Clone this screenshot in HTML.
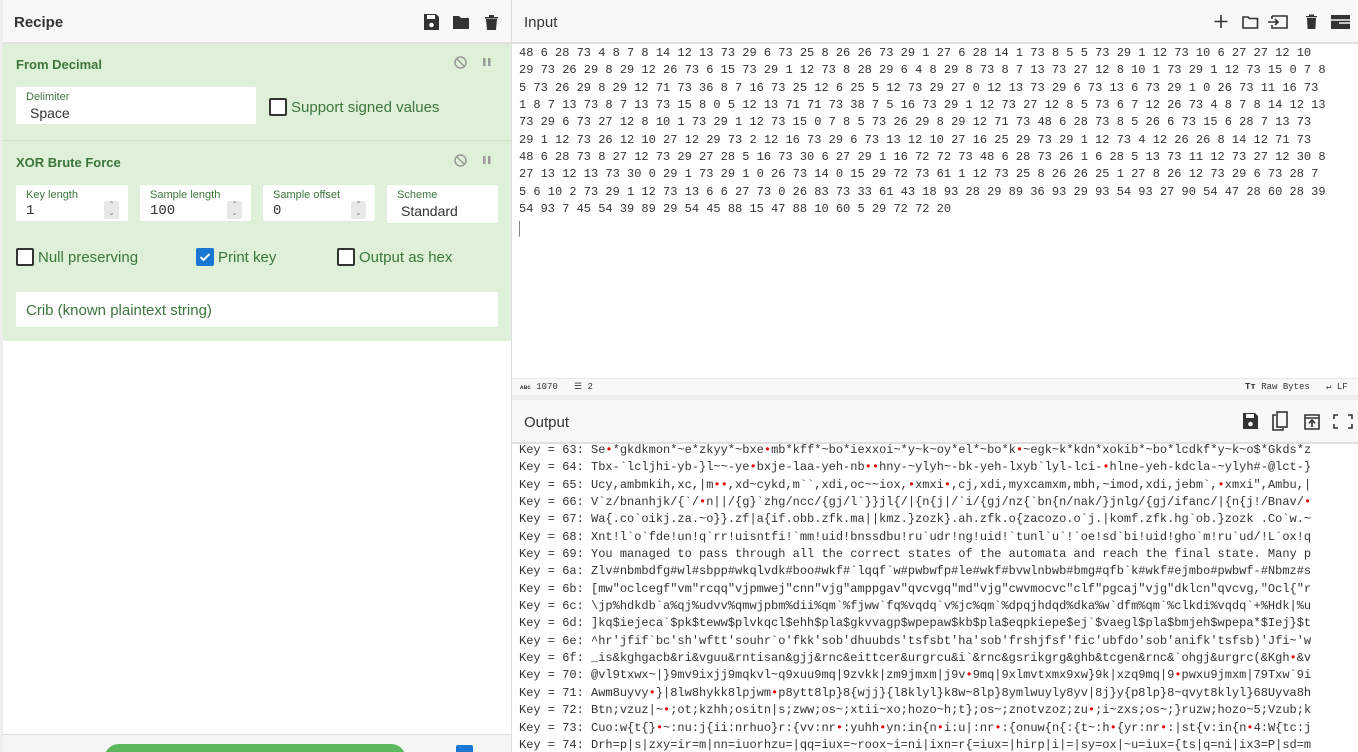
<!DOCTYPE html>
<html style="overflow:hidden;width:1358px;height:752px"><head><meta charset="utf-8"><style>
*{box-sizing:border-box;margin:0;padding:0}
body{width:1358px;height:752px;overflow:hidden;background:#fff;font-family:"Liberation Sans",sans-serif;position:relative}
.abs{position:absolute}
.hdr{background:#f8f8f8;border-bottom:2px solid #e0e0e0;height:44px}
.title{font-size:15px;font-weight:bold;color:#333;position:absolute;top:14px}
.op{font-size:13px;font-weight:bold;color:#3c763d}
.field{background:#fff;position:absolute;border-radius:2px}
.field .lbl{position:absolute;left:10px;top:4px;font-size:11px;color:#3c763d}
.field .val{position:absolute;left:10px;top:18px;font-size:14px;color:#333}
.mono{font-family:"Liberation Mono",monospace}
.cb{position:absolute;width:18px;height:18px;border:2px solid #333;border-radius:2px;background:#fff}
.cbl{position:absolute;font-size:15px;color:#3c763d}
.spin{position:absolute;width:15px;height:18px;background:#e8e8e8;border-radius:2px;color:#888;font-size:8px;text-align:center;line-height:8px}
pre{font-family:"Liberation Mono",monospace;font-size:12px;line-height:17.35px;color:#333;white-space:pre;overflow:hidden}
.r{color:#e00}
</style></head><body>
<div class="abs" style="left:0;top:0;width:512px;height:752px;border-right:1px solid #ddd;border-left:3px solid #eee;overflow:hidden">
 <div class="hdr abs" style="left:0;top:0;width:509px"><div class="title" style="left:11px">Recipe</div>
  <svg class="abs" style="left:420px;top:13px" width="80" height="18" viewBox="0 0 80 18">
   <path d="M1 1h12l3 3v13H1z" fill="#333"/><rect x="4" y="2" width="8" height="4" fill="#fff"/><circle cx="8.5" cy="12" r="2.3" fill="#fff"/>
   <path d="M30 3h6l2 2h8v11H30z" fill="#333"/>
   <path d="M62 4h13v1.5H62zM66 2h5v2h-5zM63 6h11l-1 11h-9z" fill="#333"/>
  </svg>
 </div>
 <div class="abs" style="left:0;top:44px;width:509px;height:297px;background:#dff0d8"></div>
 <div class="abs" style="left:0;top:140px;width:509px;height:1px;background:#c9e2bf"></div>
 <div class="op abs" style="left:13px;top:57px">From Decimal</div>
 <div class="op abs" style="left:13px;top:155px">XOR Brute Force</div>
 <svg class="abs" style="left:450px;top:55px" width="42" height="15"><circle cx="7.5" cy="7.5" r="5.5" fill="none" stroke="#999" stroke-width="1.5"/><path d="M3.5 3.5l8 8" stroke="#999" stroke-width="1.5"/><rect x="30" y="3" width="2.5" height="8" fill="#999"/><rect x="35" y="3" width="2.5" height="8" fill="#999"/></svg>
 <svg class="abs" style="left:450px;top:153px" width="42" height="15"><circle cx="7.5" cy="7.5" r="5.5" fill="none" stroke="#999" stroke-width="1.5"/><path d="M3.5 3.5l8 8" stroke="#999" stroke-width="1.5"/><rect x="30" y="3" width="2.5" height="8" fill="#999"/><rect x="35" y="3" width="2.5" height="8" fill="#999"/></svg>
 <div class="field" style="left:13px;top:87px;width:240px;height:37px"><div class="lbl">Delimiter</div><div class="val" style="left:14px">Space</div></div>
 <div class="cb" style="left:266px;top:98px"></div><div class="cbl" style="left:288px;top:99px">Support signed values</div>
 <div class="field" style="left:13px;top:185px;width:112px;height:36px"><div class="lbl">Key length</div><div class="val mono" style="left:10px">1</div><div class="spin" style="left:88px;top:16px">⌃<br>⌄</div></div>
 <div class="field" style="left:137px;top:185px;width:111px;height:36px"><div class="lbl">Sample length</div><div class="val mono">100</div><div class="spin" style="left:87px;top:16px">⌃<br>⌄</div></div>
 <div class="field" style="left:260px;top:185px;width:112px;height:36px"><div class="lbl">Sample offset</div><div class="val mono">0</div><div class="spin" style="left:88px;top:16px">⌃<br>⌄</div></div>
 <div class="field" style="left:384px;top:185px;width:111px;height:38px"><div class="lbl">Scheme</div><div class="val" style="left:14px;top:18px">Standard</div></div>
 <div class="cb" style="left:13px;top:248px"></div><div class="cbl" style="left:35px;top:249px">Null preserving</div>
 <div class="cb" style="left:193px;top:248px;background:#1976d2;border-color:#1976d2"><svg width="14" height="14" style="position:absolute;left:0;top:0"><path d="M2.5 7l3 3 6-6" stroke="#fff" stroke-width="2" fill="none"/></svg></div><div class="cbl" style="left:215px;top:249px">Print key</div>
 <div class="cb" style="left:334px;top:248px"></div><div class="cbl" style="left:356px;top:249px">Output as hex</div>
 <div class="field" style="left:13px;top:292px;width:482px;height:35px"><div class="cbl" style="left:10px;top:10px">Crib (known plaintext string)</div></div>
 <div class="abs" style="left:0;top:734px;width:509px;height:18px;background:#f5f5f5;border-top:1px solid #ddd"></div>
 <div class="abs" style="left:101px;top:744px;width:302px;height:30px;background:#5cb85c;border-radius:16px"></div>
 <div class="abs" style="left:453px;top:745px;width:17px;height:17px;background:#1976d2;border-radius:2px"></div>
</div>
<div class="abs" style="left:512px;top:0;width:846px;height:752px;overflow:hidden">
 <div class="hdr abs" style="left:0;top:0;width:846px"><div class="title" style="left:12px;font-weight:normal;font-size:15px">Input</div>
  <svg class="abs" style="left:700px;top:12px" width="146" height="20" viewBox="0 0 146 20">
   <path d="M9 3v13M2.5 9.5h13" stroke="#333" stroke-width="1.6"/>
   <path d="M31 5h5l1.5 1.5h8V16H31z" fill="none" stroke="#333" stroke-width="1.6"/>
   <path d="M60 4h15v12H60v-3M60 7V4M56 10h10M63 7l3 3-3 3" fill="none" stroke="#333" stroke-width="1.6"/>
   <path d="M94 4h11v1.3H94zM97 2.5h5V4h-5zM95 6h9l-.6 11h-7.8z" fill="#333"/>
   <path d="M119 3h19v14h-19z" fill="#333"/><path d="M119 8h19M127 11h11" stroke="#f8f8f8" stroke-width="1.4"/>
  </svg>
 </div>
 <pre class="abs" style="left:7px;top:45px;width:836px">48 6 28 73 4 8 7 8 14 12 13 73 29 6 73 25 8 26 26 73 29 1 27 6 28 14 1 73 8 5 5 73 29 1 12 73 10 6 27 27 12 10
29 73 26 29 8 29 12 26 73 6 15 73 29 1 12 73 8 28 29 6 4 8 29 8 73 8 7 13 73 27 12 8 10 1 73 29 1 12 73 15 0 7 8
5 73 26 29 8 29 12 71 73 36 8 7 16 73 25 12 6 25 5 12 73 29 27 0 12 13 73 29 6 73 13 6 73 29 1 0 26 73 11 16 73
1 8 7 13 73 8 7 13 73 15 8 0 5 12 13 71 71 73 38 7 5 16 73 29 1 12 73 27 12 8 5 73 6 7 12 26 73 4 8 7 8 14 12 13
73 29 6 73 27 12 8 10 1 73 29 1 12 73 15 0 7 8 5 73 26 29 8 29 12 71 73 48 6 28 73 8 5 26 6 73 15 6 28 7 13 73
29 1 12 73 26 12 10 27 12 29 73 2 12 16 73 29 6 73 13 12 10 27 16 25 29 73 29 1 12 73 4 12 26 26 8 14 12 71 73
48 6 28 73 8 27 12 73 29 27 28 5 16 73 30 6 27 29 1 16 72 72 73 48 6 28 73 26 1 6 28 5 13 73 11 12 73 27 12 30 8
27 13 12 13 73 30 0 29 1 73 29 1 0 26 73 14 0 15 29 72 73 61 1 12 73 25 8 26 26 25 1 27 8 26 12 73 29 6 73 28 7
5 6 10 2 73 29 1 12 73 13 6 6 27 73 0 26 83 73 33 61 43 18 93 28 29 89 36 93 29 93 54 93 27 90 54 47 28 60 28 39
54 93 7 45 54 39 89 29 54 45 88 15 47 88 10 60 5 29 72 72 20</pre>
 <div class="abs" style="left:7px;top:221px;width:1px;height:16px;background:#888"></div>
 <div class="abs" style="left:0;top:378px;width:846px;height:17px;background:#f8f8f8;border-top:1px solid #e8e8e8;font-size:9px;color:#333">
  <span class="abs mono" style="left:8px;top:3px"><b style="font-size:6px">ᴀʙᴄ</b> 1070 &nbsp;&nbsp;☰ 2</span>
  <span class="abs mono" style="left:733px;top:3px"><b>Tт</b> Raw Bytes &nbsp; ↵ LF</span>
 </div>
 <div class="abs" style="left:0;top:395px;width:846px;height:5px;background:#eee"></div>
 <div class="hdr abs" style="left:0;top:400px;width:846px"><div class="title" style="left:12px;font-weight:normal;font-size:15px">Output</div>
  <svg class="abs" style="left:730px;top:11px" width="116" height="22" viewBox="0 0 116 22">
   <path d="M1 2h12l3 3v13H1z" fill="#333"/><rect x="4" y="3" width="8" height="4" fill="#f8f8f8"/><circle cx="8.5" cy="13" r="2.3" fill="#f8f8f8"/>
   <path d="M34 4h-3v15h10v-2" fill="none" stroke="#333" stroke-width="1.6"/><rect x="35" y="1" width="10" height="15" fill="none" stroke="#333" stroke-width="1.6"/>
   <path d="M63 4h14v14H63zM63 7h14M70 16v-7M67 12l3-3 3 3" fill="none" stroke="#333" stroke-width="1.6"/>
   <path d="M92 8V4h4M106 4h4v4M92 13v4h4M106 17h4v-4" fill="none" stroke="#333" stroke-width="1.6"/>
  </svg>
 </div>
 <pre class="abs" style="left:7px;top:442px;width:839px;height:310px">Key = 63: Se<span class="r">•</span>*gkdkmon*~e*zkyy*~bxe<span class="r">•</span>mb*kff*~bo*iexxoi~*y~k~oy*el*~bo*k<span class="r">•</span>~egk~k*kdn*xokib*~bo*lcdkf*y~k~o$*Gkds*z
Key = 64: Tbx-`lcljhi-yb-}l~~-ye<span class="r">•</span>bxje-laa-yeh-nb<span class="r">••</span>hny-~ylyh~-bk-yeh-lxyb`lyl-lci-<span class="r">•</span>hlne-yeh-kdcla-~ylyh#-@lct-}
Key = 65: Ucy,ambmkih,xc,|m<span class="r">••</span>,xd~cykd,m``,xdi,oc~~iox,<span class="r">•</span>xmxi<span class="r">•</span>,cj,xdi,myxcamxm,mbh,~imod,xdi,jebm`,<span class="r">•</span>xmxi",Ambu,|
Key = 66: V`z/bnanhjk/{`/<span class="r">•</span>n||/{g}`zhg/ncc/{gj/l`}}jl{/|{n{j|/`i/{gj/nz{`bn{n/nak/}jnlg/{gj/ifanc/|{n{j!/Bnav/<span class="r">•</span>
Key = 67: Wa{.co`oikj.za.~o}}.zf|a{if.obb.zfk.ma||kmz.}zozk}.ah.zfk.o{zacozo.o`j.|komf.zfk.hg`ob.}zozk .Co`w.~
Key = 68: Xnt!l`o`fde!un!q`rr!uisntfi!`mm!uid!bnssdbu!ru`udr!ng!uid!`tunl`u`!`oe!sd`bi!uid!gho`m!ru`ud/!L`ox!q
Key = 69: You managed to pass through all the correct states of the automata and reach the final state. Many p
Key = 6a: Zlv#nbmbdfg#wl#sbpp#wkqlvdk#boo#wkf#`lqqf`w#pwbwfp#le#wkf#bvwlnbwb#bmg#qfb`k#wkf#ejmbo#pwbwf-#Nbmz#s
Key = 6b: [mw"oclcegf"vm"rcqq"vjpmwej"cnn"vjg"amppgav"qvcvgq"md"vjg"cwvmocvc"clf"pgcaj"vjg"dklcn"qvcvg,"Ocl{"r
Key = 6c: \jp%hdkdb`a%qj%udvv%qmwjpbm%dii%qm`%fjww`fq%vqdq`v%jc%qm`%dpqjhdqd%dka%w`dfm%qm`%clkdi%vqdq`+%Hdk|%u
Key = 6d: ]kq$iejeca`$pk$teww$plvkqcl$ehh$pla$gkvvagp$wpepaw$kb$pla$eqpkiepe$ej`$vaegl$pla$bmjeh$wpepa*$Iej}$t
Key = 6e: ^hr'jfif`bc'sh'wftt'souhr`o'fkk'sob'dhuubds'tsfsbt'ha'sob'frshjfsf'fic'ubfdo'sob'anifk'tsfsb)'Jfi~'w
Key = 6f: _is&kghgacb&ri&vguu&rntisan&gjj&rnc&eittcer&urgrcu&i`&rnc&gsrikgrg&ghb&tcgen&rnc&`ohgj&urgrc(&Kgh<span class="r">•</span>&v
Key = 70: @vl9txwx~|}9mv9ixjj9mqkvl~q9xuu9mq|9zvkk|zm9jmxm|j9v<span class="r">•</span>9mq|9xlmvtxmx9xw}9k|xzq9mq|9<span class="r">•</span>pwxu9jmxm|79Txw`9i
Key = 71: Awm8uyvy<span class="r">•</span>}|8lw8hykk8lpjwm<span class="r">•</span>p8ytt8lp}8{wjj}{l8klyl}k8w~8lp}8ymlwuyly8yv|8j}y{p8lp}8~qvyt8klyl}68Uyva8h
Key = 72: Btn;vzuz|~<span class="r">•</span>;ot;kzhh;ositn|s;zww;os~;xtii~xo;hozo~h;t};os~;znotvzoz;zu<span class="r">•</span>;i~zxs;os~;}ruzw;hozo~5;Vzub;k
Key = 73: Cuo:w{t{}<span class="r">•</span>~:nu:j{ii:nrhuo}r:{vv:nr<span class="r">•</span>:yuhh<span class="r">•</span>yn:in{n<span class="r">•</span>i:u|:nr<span class="r">•</span>:{onuw{n{:{t~:h<span class="r">•</span>{yr:nr<span class="r">•</span>:|st{v:in{n<span class="r">•</span>4:W{tc:j
Key = 74: Drh=p|s|zxy=ir=m|nn=iuorhzu=|qq=iux=~roox~i=ni|ixn=r{=iux=|hirp|i|=|sy=ox|~u=iux={ts|q=ni|ix3=P|sd=m</pre>
</div>
</body></html>
